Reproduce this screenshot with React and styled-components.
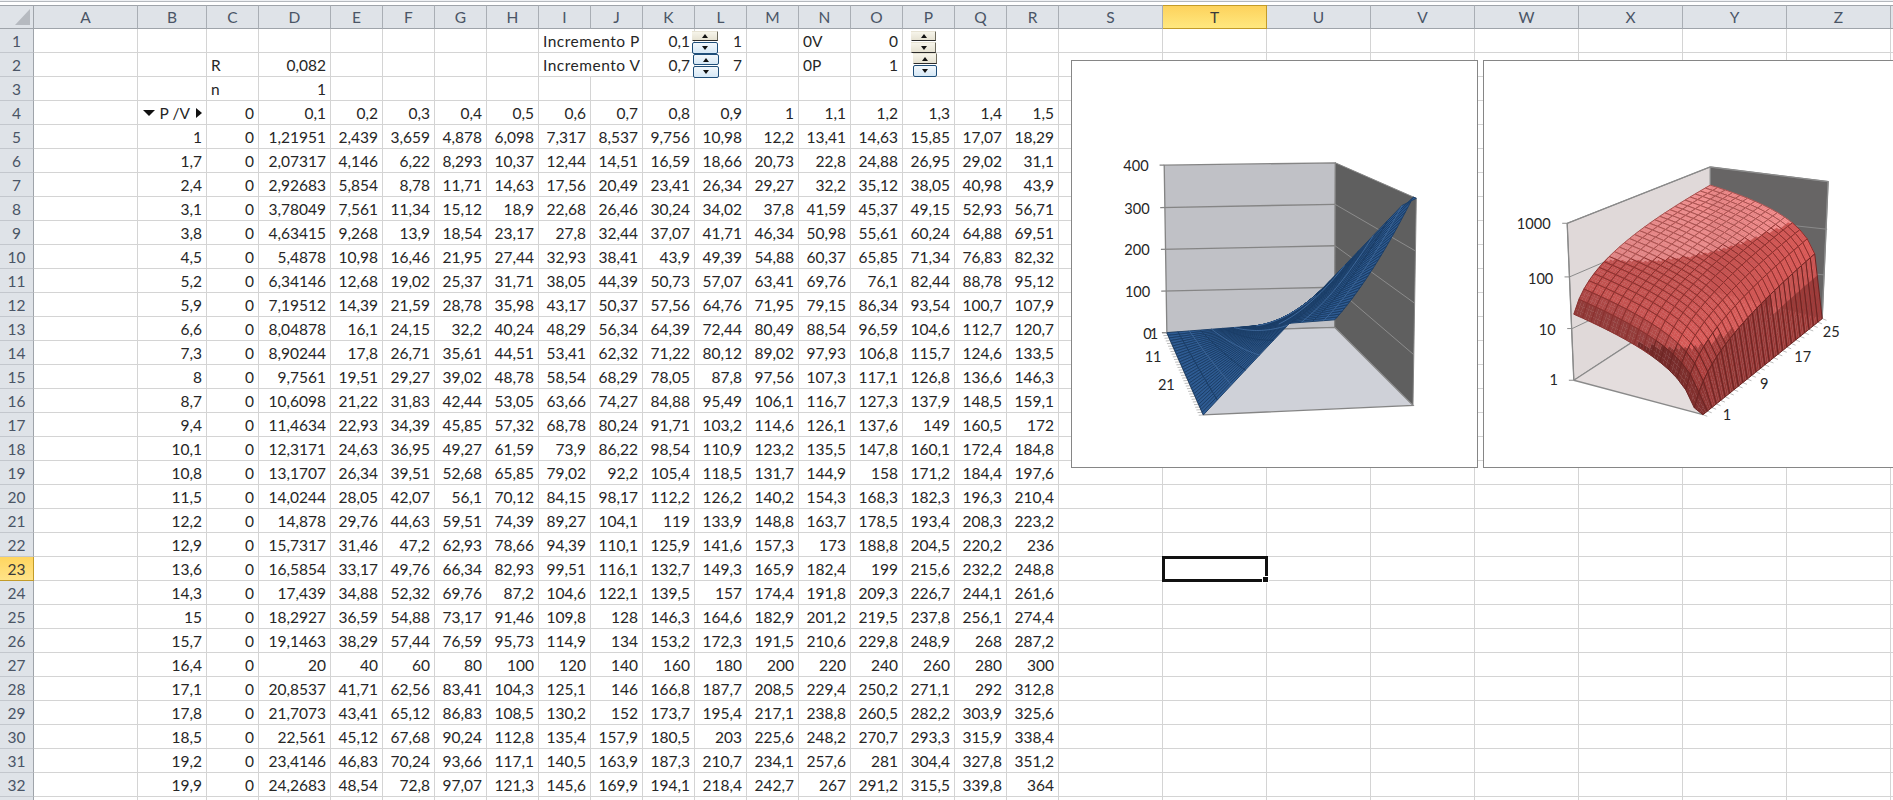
import styled, { createGlobalStyle } from 'styled-components';

const COLUMNS = 'ABCDEFGHIJKLMNOPQRSTUVWXYZ'.split('');
const R = 0.082;
const LAST_ROW = 32;
const SELECTED_COL = 'T';
const SELECTED_ROW = 23;

const pressure = (i) => (10 + 7 * i) / 10;

// same thing Excel does with General format in a narrow column
function general(value, maxChars) {
    if (value === 0) return '0';
    const intDigits = String(Math.floor(value)).length;
    const decimals = Math.max(0, maxChars - intDigits - 1);
    return String(Number(value.toFixed(decimals))).replace('.', ',');
}

function cellContent(row, col) {
    const colIndex = COLUMNS.indexOf(col);
    if (row > LAST_ROW) return undefined;
    if (row === 1) {
        return { K: '0,1', L: '1', O: '0' }[col];
    }
    if (row === 2) {
        return { D: '0,082', K: '0,7', L: '7', O: '1' }[col];
    }
    if (row === 3) {
        return { D: '1' }[col];
    }
    if (row === 4) {
        if (col === 'C') return '0';
        if (colIndex >= 3 && colIndex <= 17) return String((colIndex - 2) / 10).replace('.', ',');
        return undefined;
    }
    const p = pressure(row - 5);
    if (col === 'B') return String(p).replace('.', ',');
    if (col === 'C') return '0';
    if (colIndex >= 3 && colIndex <= 17) {
        const v = (colIndex - 2) / 10;
        return general((p * v) / R, col === 'D' ? 7 : 5);
    }
    return undefined;
}

const LEFT_TEXT = { '2C': 'R', '3C': 'n', '1N': '0V', '2N': '0P' };
const SPANNED = { '1I': 'Incremento P', '2I': 'Incremento V' };

const SPINNERS = [
    { left: 692, top: 31, width: 26, upH: 10, downH: 12, up: false, down: true },
    { left: 693, top: 54, width: 26, upH: 11, downH: 12, up: true, down: true },
    { left: 911, top: 31, width: 25, upH: 10, downH: 11, up: false, down: false },
    { left: 913, top: 53, width: 24, upH: 11, downH: 12, up: false, down: true },
];

const mix = (a, b, t) => [a[0] + (b[0] - a[0]) * t, a[1] + (b[1] - a[1]) * t];
const bilerp = (c, u, w) => mix(mix(c.a, c.b, u), mix(c.d, c.c, u), w);
const pts = (list) => list.map((p) => p[0].toFixed(1) + ',' + p[1].toFixed(1)).join(' ');

// blue surface: linear axis, clipped at 400
const BLUE = { a: [320, 848], b: [826, 832], c: [1062, 1067], d: [430, 1096] };
const BLUE_COLS = 15;
const BLUE_ROWS = 31;

function bluePoint(j, i) {
    const u = j / BLUE_COLS;
    const w = i / BLUE_ROWS;
    const floor = bilerp(BLUE, u, w);
    const wall = 505 + (496 - 505) * u + (624 - 505 - (496 - 505) * u) * w * (0.5 + 0.5 * u) + 60 * w * (1 - u);
    const val = Math.min(400, (pressure(i) * (j / 10)) / R);
    return [floor[0] + 10 * u * w * (val / 400), floor[1] - (val / 400) * wall];
}

function buildBlueSurface() {
    const quads = [];
    for (let i = 0; i < BLUE_ROWS; i++) {
        for (let j = 0; j < BLUE_COLS; j++) {
            quads.push([bluePoint(j, i), bluePoint(j + 1, i), bluePoint(j + 1, i + 1), bluePoint(j, i + 1)]);
        }
    }
    const fan = [];
    for (let j = 2; j <= BLUE_COLS; j += 2) {
        const line = [];
        for (let i = 0; i <= BLUE_ROWS; i++) line.push(bluePoint(j, i));
        fan.push(line);
    }
    const ticks = [];
    for (let i = 0; i <= BLUE_ROWS; i++) {
        const p = bilerp(BLUE, 0, i / BLUE_ROWS);
        ticks.push([p, [p[0] - 14, p[1] + 1]]);
    }
    return { quads, fan, ticks };
}

// red surface: log axis 1..1000, colour bands per decade
const RED = { a: [700, 1098], b: [310, 994], c: [722, 725], d: [1060, 808] };
const RED_COLS = 15;
const RED_ROWS = 27;
const RED_SPLIT = 3;

function redHeight(j, i) {
    const val = (pressure(i) * (j / 10)) / R;
    return val <= 1 ? 0 : Math.log10(val);
}

function redScale(u, w) {
    return 158 * (1 - w) + (138 + (125 - 138) * u) * w;
}

const BANDS = [
    { fill: [158, 58, 56], line: '#6c2422' },
    { fill: [205, 84, 82], line: '#8a302e' },
    { fill: [240, 138, 138], line: '#a65250' },
];

const bandOf = (z) => BANDS[z < 1 ? 0 : z < 2 ? 1 : 2];

function buildRedSurface() {
    const quads = [];
    for (let i = 0; i < RED_ROWS; i++) {
        for (let j = 0; j < RED_COLS; j++) {
            const h00 = redHeight(j, i);
            const h10 = redHeight(j + 1, i);
            const h01 = redHeight(j, i + 1);
            const h11 = redHeight(j + 1, i + 1);

            const du = ((h10 + h11 - h00 - h01) / 2) * RED_COLS * 0.22;
            const dw = ((h01 + h11 - h00 - h10) / 2) * RED_ROWS * 0.22;
            const len = Math.sqrt(du * du + dw * dw + 1);
            const facing = (du + dw + 1) / (len * Math.sqrt(3));
            const front = i === 0 ? 0.76 : i === 1 ? 0.88 : 1;
            const light = (0.92 + 0.28 * Math.pow(facing, 6)) * (0.92 + 0.16 * (i / RED_ROWS)) * front;

            // one cell of the mesh is cut in pieces so the band edges come out as curves
            const at = (a, b) => {
                const z = h00 * (1 - a) * (1 - b) + h10 * a * (1 - b) + h01 * (1 - a) * b + h11 * a * b;
                const u = (j + a) / RED_COLS;
                const w = (i + b) / RED_ROWS;
                const floor = bilerp(RED, u, w);
                return { z, point: [floor[0], floor[1] - z * redScale(u, w)] };
            };

            const pieces = [];
            for (let b = 0; b < RED_SPLIT; b++) {
                for (let a = 0; a < RED_SPLIT; a++) {
                    const a0 = a / RED_SPLIT;
                    const a1 = (a + 1) / RED_SPLIT;
                    const b0 = b / RED_SPLIT;
                    const b1 = (b + 1) / RED_SPLIT;
                    const mid = at((a0 + a1) / 2, (b0 + b1) / 2).z;
                    const fill = bandOf(mid).fill.map((c) => Math.min(255, Math.round(c * light)));
                    pieces.push({
                        points: [at(a0, b0).point, at(a1, b0).point, at(a1, b1).point, at(a0, b1).point],
                        fill: 'rgb(' + fill.join(',') + ')',
                    });
                }
            }

            const center = bilerp(RED, (j + 0.5) / RED_COLS, (i + 0.5) / RED_ROWS);
            quads.push({
                depth: center[1],
                pieces,
                outline: [at(0, 0).point, at(1, 0).point, at(1, 1).point, at(0, 1).point],
                line: bandOf(at(0.5, 0.5).z).line,
            });
        }
    }
    quads.sort((x, y) => x.depth - y.depth);
    const ticks = [];
    for (let i = 0; i <= RED_ROWS; i++) {
        const p = bilerp(RED, 0, i / RED_ROWS);
        ticks.push([p, [p[0] + 13, p[1] + 5]]);
    }
    return { quads, ticks };
}

const blue = buildBlueSurface();
const red = buildRedSurface();

function BlueChart() {
    return (
        <ChartBox $left={1071} $width={407}>
            <svg viewBox="34 30 1221 1222" width="100%" height="100%">
                <polygon points="312,343 828,336 826,832 320,848" fill="#c0c1c6" stroke="#858585" strokeWidth="4" />
                <polygon points="828,336 1072,443 1062,1067 826,832" fill="#5f5f5f" stroke="#858585" strokeWidth="3" />
                <polygon points="320,848 826,832 1062,1067 430,1096" fill="#cfd1d8" stroke="#858585" strokeWidth="4" />
                <path d="M298 343H312 M300 471L827 461 M302 597L827 586 M303 723L827 711 M305 848H320" stroke="#858585" strokeWidth="4" fill="none" />
                <path d="M827 461L1070 602 M827 586L1068 760 M827 711L1065 915" stroke="#8c8c8c" strokeWidth="3" fill="none" />
                {blue.ticks.map((t, i) => (
                    <line key={i} x1={t[0][0]} y1={t[0][1]} x2={t[1][0]} y2={t[1][1]} stroke="#999" strokeWidth="2" />
                ))}
                {blue.quads.map((q, i) => (
                    <polygon key={i} points={pts(q)} fill="#2e5b92" stroke="#1a3c66" strokeWidth="2.8" />
                ))}
                {blue.fan.map((line, i) => (
                    <polyline key={i} points={pts(line)} fill="none" stroke="#5f90ca" strokeWidth="2.6" strokeOpacity="0.6" />
                ))}
                <AxisLabel x="265" y="360" textAnchor="end">400</AxisLabel>
                <AxisLabel x="268" y="489" textAnchor="end">300</AxisLabel>
                <AxisLabel x="268" y="615" textAnchor="end">200</AxisLabel>
                <AxisLabel x="270" y="741" textAnchor="end">100</AxisLabel>
                <AxisLabel x="288" y="866" textAnchor="end" letterSpacing="-6">01</AxisLabel>
                <AxisLabel x="304" y="936" textAnchor="end">11</AxisLabel>
                <AxisLabel x="344" y="1020" textAnchor="end">21</AxisLabel>
            </svg>
        </ChartBox>
    );
}

function RedChart() {
    return (
        <ChartBox $left={1483} $width={430}>
            <svg viewBox="40 30 1290 1226" width="100%" height="100%">
                <polygon points="290,520 722,350 722,725 310,994" fill="#e0d9d9" stroke="#8a8a8a" strokeWidth="3" />
                <polygon points="722,350 1078,394 1060,808 722,725" fill="#676565" stroke="#8a8a8a" strokeWidth="3" />
                <polygon points="310,994 700,1098 1060,808 722,725" fill="#e4dddd" />
                <path d="M310 994L700 1098 M310 994L722 725 M290 520L310 994 M290 520L722 350 M722 350L1078 394 L1060 808" stroke="#8a8a8a" strokeWidth="4" fill="none" />
                <path d="M275 520H290 M282 682H297 L722 500 M722 500L1075 538 M290 838H305 L722 640 M722 640L1066 676 M295 994H310" stroke="#8a8a8a" strokeWidth="3" fill="none" />
                {red.ticks.map((t, i) => (
                    <line key={i} x1={t[0][0]} y1={t[0][1]} x2={t[1][0]} y2={t[1][1]} stroke="#999" strokeWidth="2" />
                ))}
                {red.quads.map((q, i) => (
                    <g key={i}>
                        {q.pieces.map((piece, k) => (
                            <polygon key={k} points={pts(piece.points)} fill={piece.fill} stroke={piece.fill} strokeWidth="0.8" />
                        ))}
                        <polygon points={pts(q.outline)} fill="none" stroke={q.line} strokeWidth="3" />
                    </g>
                ))}
                <AxisLabel x="240" y="538" textAnchor="end">1000</AxisLabel>
                <AxisLabel x="248" y="702" textAnchor="end">100</AxisLabel>
                <AxisLabel x="255" y="858" textAnchor="end">10</AxisLabel>
                <AxisLabel x="262" y="1008" textAnchor="end">1</AxisLabel>
                <AxisLabel x="760" y="1114">1</AxisLabel>
                <AxisLabel x="872" y="1020">9</AxisLabel>
                <AxisLabel x="976" y="939">17</AxisLabel>
                <AxisLabel x="1062" y="864">25</AxisLabel>
            </svg>
        </ChartBox>
    );
}

function SheetRow({ row }) {
    return (
        <>
            <RowHeader $selected={row === SELECTED_ROW}>{row <= LAST_ROW ? row : ''}</RowHeader>
            {COLUMNS.map((col) => {
                const key = row + col;
                if (SPANNED[key]) {
                    return <Cell key={col} $left $label $span={2}>{SPANNED[key]}</Cell>;
                }
                if (SPANNED[row + COLUMNS[COLUMNS.indexOf(col) - 1]]) return null;
                if (row === 4 && col === 'B') {
                    return (
                        <Cell key={col}>
                            <ArrowDown />
                            <AxisName>P /V</AxisName>
                            <ArrowRight />
                        </Cell>
                    );
                }
                if (LEFT_TEXT[key]) return <Cell key={col} $left>{LEFT_TEXT[key]}</Cell>;
                return (
                    <Cell key={col} $selected={col === SELECTED_COL && row === SELECTED_ROW}>
                        {cellContent(row, col)}
                    </Cell>
                );
            })}
            <Cell />
        </>
    );
}

function App() {
    const rows = [];
    for (let r = 1; r <= LAST_ROW + 1; r++) rows.push(r);

    return (
        <Sheet>
            <GlobalStyle />
            <TopStrip />
            <Grid>
                <Corner><CornerMark /></Corner>
                {COLUMNS.map((col) => (
                    <ColumnHeader key={col} $selected={col === SELECTED_COL}>{col}</ColumnHeader>
                ))}
                <ColumnHeader />
                {rows.map((row) => <SheetRow key={row} row={row} />)}
            </Grid>

            {SPINNERS.map((s, i) => (
                <Spinner key={i} $left={s.left} $top={s.top} $width={s.width}>
                    <SpinButton $height={s.upH} $active={s.up}><SpinUp /></SpinButton>
                    <SpinButton $height={s.downH} $active={s.down}><SpinDown /></SpinButton>
                </Spinner>
            ))}

            <BlueChart />
            <RedChart />
        </Sheet>
    );
}

const GlobalStyle = createGlobalStyle`
    html, body {
        margin: 0;
        padding: 0;
        background: #fff;
        overflow: hidden;
    }
`;

const Sheet = styled.div`
    position: relative;
    width: 1893px;
    height: 800px;
    overflow: hidden;
    background: #fff;
    font-family: Lato, "Liberation Sans", sans-serif;
    font-size: 15.5px;
    color: #262626;
`;

const TopStrip = styled.div`
    height: 5px;
    box-sizing: border-box;
    background: linear-gradient(#eef0f3 0, #eef0f3 1px, #b4b8bd 1px, #b4b8bd 2px, #fff 2px);
`;

const Grid = styled.div`
    display: grid;
    grid-template-columns: 34px 104px 69px 52px 72px repeat(14, 52px) repeat(8, 104px) 1fr;
    grid-auto-rows: 24px;
`;

const HeaderCell = styled.div`
    box-sizing: border-box;
    display: flex;
    align-items: center;
    justify-content: center;
    color: #4a5566;
    overflow: hidden;
`;

const Corner = styled(HeaderCell)`
    background: #dfe3e8;
    border-top: 1px solid #9fa4aa;
    border-right: 1px solid #9fa4aa;
    border-bottom: 1px solid #9fa4aa;
    justify-content: flex-end;
    align-items: flex-end;
    padding: 0 3px 3px 0;
`;

const CornerMark = styled.div`
    width: 15px;
    height: 16px;
    background: #b6bac0;
    clip-path: polygon(100% 0, 100% 100%, 0 100%);
`;

const ColumnHeader = styled(HeaderCell)`
    background: ${(p) => (p.$selected ? 'linear-gradient(#fdd25c, #ffe87f)' : '#dfe3e8')};
    border-top: 1px solid ${(p) => (p.$selected ? '#c29b29' : '#9fa4aa')};
    border-right: 1px solid ${(p) => (p.$selected ? '#c29b29' : '#a9aeb4')};
    border-bottom: 1px solid ${(p) => (p.$selected ? '#c29b29' : '#9fa4aa')};
    color: ${(p) => (p.$selected ? '#3a3a3a' : '#4a5566')};
`;

const RowHeader = styled(HeaderCell)`
    background: ${(p) => (p.$selected ? 'linear-gradient(#ffd55f, #ffe388)' : '#dfe3e8')};
    border-right: 1px solid ${(p) => (p.$selected ? '#c29b29' : '#9fa4aa')};
    border-bottom: 1px solid ${(p) => (p.$selected ? '#c29b29' : '#c3c7cd')};
    color: ${(p) => (p.$selected ? '#3a3a3a' : '#4a5566')};
`;

const Cell = styled.div`
    position: relative;
    box-sizing: border-box;
    display: flex;
    align-items: center;
    justify-content: ${(p) => (p.$left ? 'flex-start' : 'flex-end')};
    padding: 0 4px;
    white-space: nowrap;
    overflow: ${(p) => (p.$selected ? 'visible' : 'hidden')};
    letter-spacing: ${(p) => (p.$label ? '0.5px' : 'normal')};
    grid-column: ${(p) => (p.$span ? `span ${p.$span}` : 'auto')};
    border-right: 1px solid #d4d4d4;
    border-bottom: 1px solid #d4d4d4;
    ${(p) => p.$selected && `
        outline: 3px solid #111;
        outline-offset: -2px;
        z-index: 2;
        &::after {
            content: '';
            position: absolute;
            right: -3px;
            bottom: -3px;
            width: 5px;
            height: 5px;
            background: #111;
            border: 1px solid #fff;
        }
    `}
`;

const AxisName = styled.span`
    margin: 0 6px 0 5px;
`;

const ArrowDown = styled.span`
    width: 0;
    height: 0;
    border-left: 6px solid transparent;
    border-right: 6px solid transparent;
    border-top: 6px solid #111;
`;

const ArrowRight = styled.span`
    width: 0;
    height: 0;
    border-top: 5px solid transparent;
    border-bottom: 5px solid transparent;
    border-left: 6px solid #111;
`;

const Spinner = styled.div`
    position: absolute;
    left: ${(p) => p.$left}px;
    top: ${(p) => p.$top}px;
    width: ${(p) => p.$width}px;
    display: flex;
    flex-direction: column;
    gap: 1px;
    z-index: 3;
`;

const SpinButton = styled.div`
    box-sizing: border-box;
    height: ${(p) => p.$height}px;
    display: flex;
    align-items: center;
    justify-content: center;
    background: ${(p) => (p.$active ? 'linear-gradient(#f3f8fc, #d6e8f6)' : 'linear-gradient(#f6f4ea, #e6e2d2)')};
    border: 1px solid ${(p) => (p.$active ? '#1f4e79' : 'transparent')};
    border-radius: ${(p) => (p.$active ? '2px' : '0')};
    border-bottom: 1px solid ${(p) => (p.$active ? '#1f4e79' : '#2b2b2b')};
    border-right: 1px solid ${(p) => (p.$active ? '#1f4e79' : '#6d6a5c')};
`;

const SpinUp = styled.span`
    width: 0;
    height: 0;
    border-left: 3.5px solid transparent;
    border-right: 3.5px solid transparent;
    border-bottom: 4px solid #111;
`;

const SpinDown = styled.span`
    width: 0;
    height: 0;
    border-left: 3.5px solid transparent;
    border-right: 3.5px solid transparent;
    border-top: 4px solid #111;
`;

const ChartBox = styled.div`
    position: absolute;
    left: ${(p) => p.$left}px;
    top: 60px;
    width: ${(p) => p.$width}px;
    height: 408px;
    box-sizing: border-box;
    background: #fff;
    border: 1px solid #868686;
    z-index: 1;
`;

const AxisLabel = styled.text`
    font-family: Lato, "Liberation Sans", sans-serif;
    font-size: 44px;
    fill: #262626;
`;

export default App;
